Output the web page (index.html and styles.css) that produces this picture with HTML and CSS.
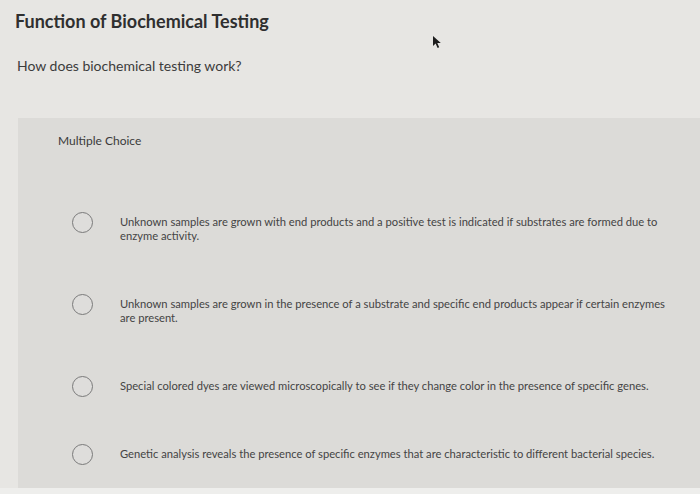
FILE: index.html
```html
<!DOCTYPE html>
<html lang="en">
<head>
<meta charset="utf-8">
<title>Function of Biochemical Testing</title>
<link rel="stylesheet" href="styles.css">
</head>
<body>
<div class="page">
  <header class="header">
    <h1 class="title">Function of Biochemical Testing</h1>
    <p class="question">How does biochemical testing work?</p>
  </header>
  <section class="panel">
    <div class="kind">Multiple Choice</div>
    <ul class="options">
      <li class="option"><span class="radio"></span><span class="label">Unknown samples are grown with end products and a positive test is indicated if substrates are formed due to enzyme activity.</span></li>
      <li class="option"><span class="radio"></span><span class="label">Unknown samples are grown in the presence of a substrate and specific end products appear if certain enzymes are present.</span></li>
      <li class="option"><span class="radio"></span><span class="label">Special colored dyes are viewed microscopically to see if they change color in the presence of specific genes.</span></li>
      <li class="option"><span class="radio"></span><span class="label">Genetic analysis reveals the presence of specific enzymes that are characteristic to different bacterial species.</span></li>
    </ul>
  </section>
  <svg class="cursor" width="10" height="14" viewBox="0 0 10 14"><path d="M1 1 L1 11 L3.6 8.6 L5.6 13 L7.2 12.3 L5.3 8 L8.8 8 Z" fill="#1e1e1e"/></svg>
</div>
</body>
</html>
```

FILE: styles.css
```css
* { box-sizing: border-box; }
html, body { margin: 0; padding: 0; }
body {
  width: 700px;
  height: 494px;
  overflow: hidden;
  background: #eeeeec;
  font-family: Lato, "Liberation Sans", Arial, sans-serif;
  color: #3a3a3a;
}
.page {
  position: relative;
  height: 488px;
  background: #e7e6e3;
  display: flex;
  flex-direction: column;
}
.header {
  flex: none;
  padding: 9px 0 0 15px;
  height: 118px;
}
.title {
  margin: 0;
  font-size: 18px;
  line-height: 24px;
  font-weight: 700;
  color: #2f2f2f;
}
.question {
  margin: 23px 0 0 2px;
  font-size: 14px;
  line-height: 20px;
  color: #3c3c3c;
}
.panel {
  flex: 1;
  margin-left: 18px;
  background: #dcdbd8;
  padding: 15px 0 0 40px;
}
.kind {
  font-size: 12px;
  line-height: 16px;
  color: #3a3a3a;
}
.options {
  list-style: none;
  margin: 66px 0 0 0;
  padding: 0 0 0 14px;
  display: flex;
  flex-direction: column;
  gap: 54px;
}
.option {
  display: flex;
  align-items: flex-start;
  gap: 27px;
}
.radio {
  flex: none;
  width: 21px;
  height: 21px;
  margin: -3px 0 -4px 0;
  border: 1.4px solid #7a7a7a;
  border-radius: 50%;
  background: #dedddb;
}
.label {
  width: 552px;
  font-size: 11.2px;
  line-height: 14px;
  color: #444;
}
.cursor {
  position: absolute;
  left: 432px;
  top: 35px;
}
```
